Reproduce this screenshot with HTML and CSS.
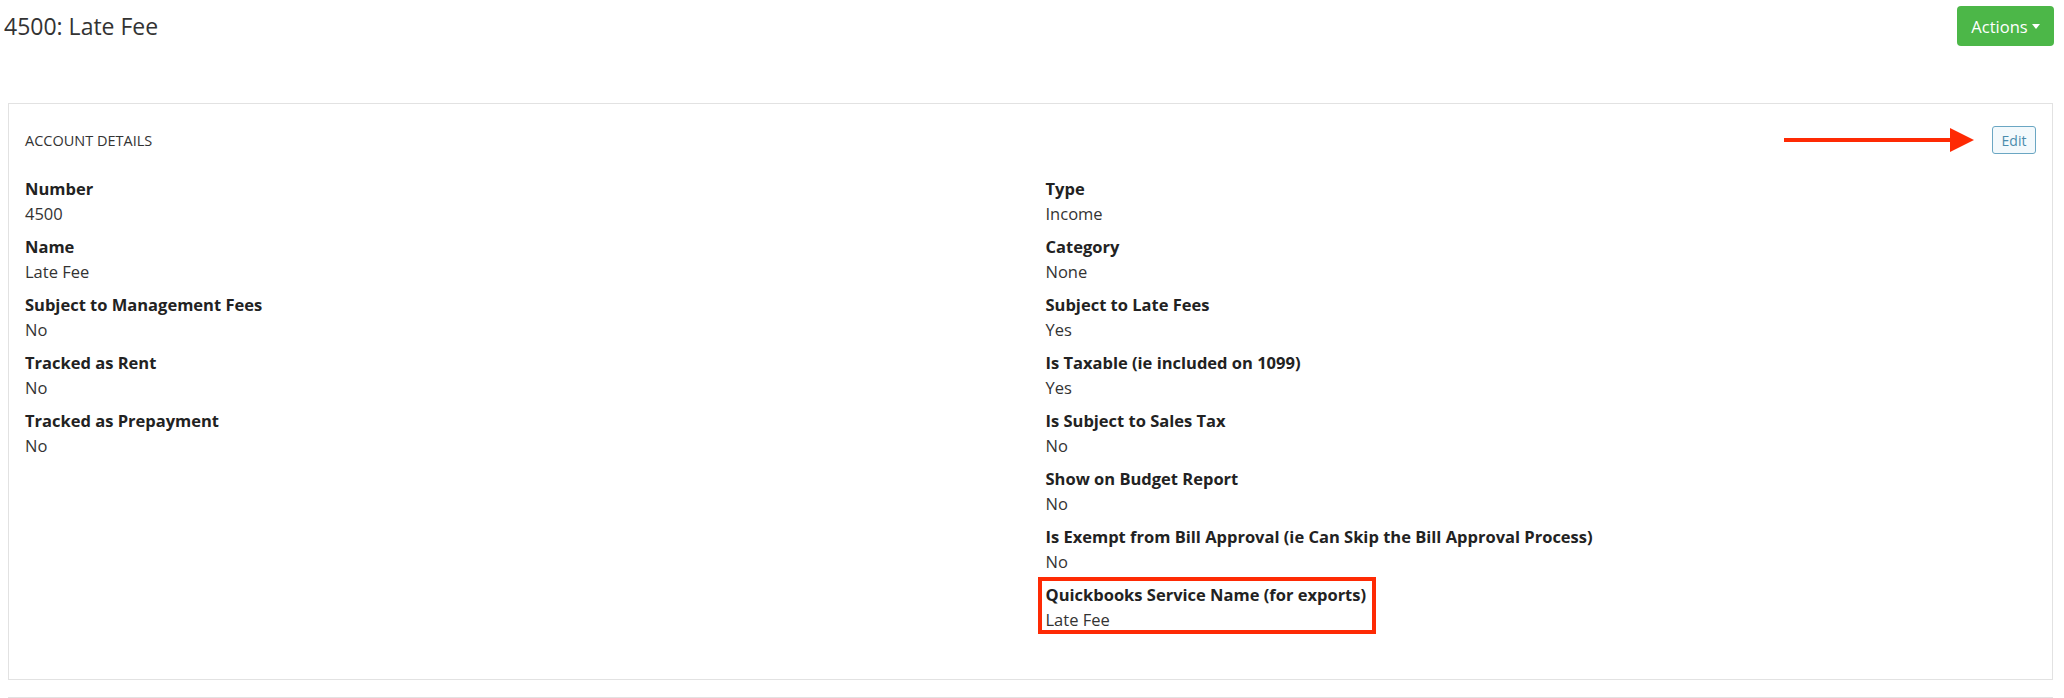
FILE: index.html
```html
<!DOCTYPE html>
<html lang="en">
<head>
    <meta charset="UTF-8" />
    <title>4500: Late Fee</title>
    <link rel="stylesheet" href="styles.css">
</head>
<body>
<div class="page-header">
    <h1>4500: Late Fee</h1>
    <button class="btn-actions">Actions <span class="caret"></span></button>
</div>

<div class="panel">
    <div class="panel-heading">
        <span class="panel-title">Account Details</span>
        <svg class="pointer" width="192" height="24" viewBox="0 0 192 24">
            <rect x="0" y="10" width="168" height="4" fill="#fe2a04"/>
            <polygon points="166,0 190,12 166,24" fill="#fe2a04"/>
        </svg>
        <button class="btn-edit">Edit</button>
    </div>

    <div class="details">
        <dl class="details-col">
            <div class="field"><dt>Number</dt><dd>4500</dd></div>
            <div class="field"><dt>Name</dt><dd>Late Fee</dd></div>
            <div class="field"><dt>Subject to Management Fees</dt><dd>No</dd></div>
            <div class="field"><dt>Tracked as Rent</dt><dd>No</dd></div>
            <div class="field"><dt>Tracked as Prepayment</dt><dd>No</dd></div>
        </dl>
        <dl class="details-col">
            <div class="field"><dt>Type</dt><dd>Income</dd></div>
            <div class="field"><dt>Category</dt><dd>None</dd></div>
            <div class="field"><dt>Subject to Late Fees</dt><dd>Yes</dd></div>
            <div class="field"><dt>Is Taxable (ie included on 1099)</dt><dd>Yes</dd></div>
            <div class="field"><dt>Is Subject to Sales Tax</dt><dd>No</dd></div>
            <div class="field"><dt>Show on Budget Report</dt><dd>No</dd></div>
            <div class="field"><dt>Is Exempt from Bill Approval (ie Can Skip the Bill Approval Process)</dt><dd>No</dd></div>
            <div class="field marked">
                <span class="mark-box"></span>
                <dt>Quickbooks Service Name (for exports)</dt><dd>Late Fee</dd>
            </div>
        </dl>
    </div>
</div>

<div class="panel panel-next"></div>
</body>
</html>
```

FILE: styles.css
```css
body {
    font-family: "Open Sans", "Liberation Sans", sans-serif;
    margin: 0;
    color: #333;
    background: #fff;
    height: 698px;
    overflow: hidden;
}
.page-header {
    display: flex;
    justify-content: space-between;
    align-items: flex-start;
    padding: 6px 10px 0 4px;
    height: 103px;
    box-sizing: border-box;
}
.page-header h1 {
    margin: 0;
    font-size: 23px;
    font-weight: 400;
    line-height: 40px;
    color: #333;
}
.btn-actions {
    font-family: inherit;
    font-size: 16.5px;
    color: #fff;
    background: #4cb748;
    border: none;
    border-radius: 4px;
    height: 40px;
    width: 97px;
    padding: 0;
    display: flex;
    align-items: center;
    justify-content: center;
    gap: 4px;
}
.caret {
    width: 0;
    height: 0;
    border-left: 4px solid transparent;
    border-right: 4px solid transparent;
    border-top: 5px solid #fff;
}
.panel {
    margin: 0 11px 16px 8px;
    border: 1px solid #e2e2e2;
    padding: 22px 16px 39px;
}
.panel-heading {
    display: flex;
    align-items: center;
    height: 28px;
}
.panel-title {
    font-size: 14.5px;
    text-transform: uppercase;
    flex: 1;
}
.pointer {
    margin-right: 16px;
}
.btn-edit {
    font-family: inherit;
    font-size: 14px;
    color: #4a8cad;
    background: #f3f9fc;
    border: 1px solid #6aa6c3;
    border-radius: 3px;
    height: 28px;
    width: 44px;
    padding: 0;
}
.details {
    display: grid;
    grid-template-columns: 1fr 1fr;
    column-gap: 30px;
    margin-top: 22px;
}
.details-col {
    margin: 0;
}
.field {
    margin-bottom: 8px;
    line-height: 25px;
    font-size: 16.5px;
}
.field dt {
    font-weight: 700;
    color: #222;
}
.field dd {
    margin: 0;
}
.marked {
    position: relative;
}
.mark-box {
    position: absolute;
    left: -8px;
    top: -5px;
    width: 338px;
    height: 57px;
    border: 4px solid #fe2a04;
    box-sizing: border-box;
}
.panel-next {
    height: 40px;
    margin-top: 17px;
}
```
